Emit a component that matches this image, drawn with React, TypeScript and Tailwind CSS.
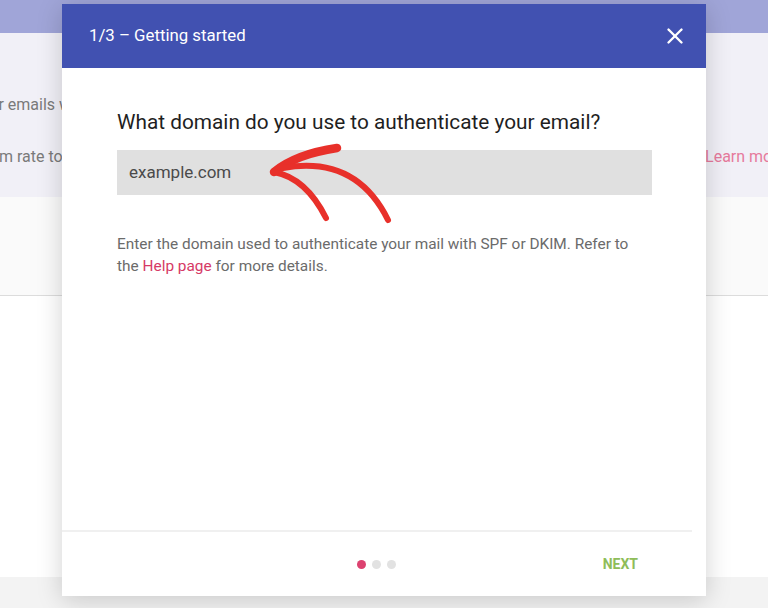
import { X } from "lucide-react";

const dots = ["bg-[#dc4270]", "bg-[#e2e2e2]", "bg-[#e2e2e2]"];

function BackgroundPage() {
  return (
    <div className="flex h-full flex-col">
      <div className="h-[33px] bg-[#a0a5d8]" />
      <div className="flex h-[164px] flex-col bg-[#f1f0f7] pt-[60px] text-[16px] text-[#7a7a7a]">
        <div className="flex h-[24px] items-center">
          <span className="-ml-[27px] whitespace-nowrap">your emails will be</span>
        </div>
        <div className="mt-[28px] flex h-[24px] items-center justify-between">
          <span className="-ml-[27px] whitespace-nowrap">spam rate to you</span>
          <span className="-mr-[18px] whitespace-nowrap text-[#e67a9c]">Learn more</span>
        </div>
      </div>
      <div className="h-[99px] border-b border-[#dcdcdc] bg-[#fafafa]" />
      <div className="h-[281px] bg-white" />
      <div className="flex-1 bg-[#f3f3f3]" />
    </div>
  );
}

function RedArrow() {
  return (
    <svg
      className="pointer-events-none absolute inset-0"
      width="768"
      height="608"
      viewBox="0 0 768 608"
      fill="none"
      stroke="#e8302a"
      strokeLinecap="round"
      strokeLinejoin="round"
    >
      <path d="M274 172 Q296 154 337 148" strokeWidth="8.5" />
      <path d="M274 172 Q306 178 326 218" strokeWidth="6" />
      <path d="M283 168 Q356 155 388 220" strokeWidth="6" />
    </svg>
  );
}

export default function App() {
  return (
    <div className="relative h-[608px] w-[768px] overflow-hidden bg-white font-['Roboto',sans-serif]">
      <BackgroundPage />

      <div className="absolute left-[62px] top-[4px] flex h-[592px] w-[644px] flex-col bg-white shadow-[0_4px_24px_rgba(0,0,0,0.18)]">
        <header className="flex h-[64px] items-center justify-between bg-[#4151b1] pl-[27px] pr-[18px]">
          <h1 className="text-[16.8px] text-white">1/3 – Getting started</h1>
          <X className="size-[26px] text-white" strokeWidth={2.2} />
        </header>

        <div className="flex flex-1 flex-col px-[55px] pt-[40px]">
          <h2 className="text-[20.8px] leading-[28px] text-[#1f1f1f]">
            What domain do you use to authenticate your email?
          </h2>
          <div className="mt-[14px] flex h-[45px] w-[535px] items-center bg-[#e0e0e0] px-[12px] text-[17px] text-[#4a4a4a]">
            example.com
          </div>
          <p className="mt-[38px] text-[15.4px] leading-[22px] text-[#6b6b6b]">
            Enter the domain used to authenticate your mail with SPF or DKIM. Refer to
            <br />
            the <span className="text-[#d63a66]">Help page</span> for more details.
          </p>
        </div>

        <div className="mr-[14px] h-[2px] bg-[#f0f0f0]" />
        <footer className="flex h-[64px] items-center pl-[295px] pr-[68px]">
          <div className="flex gap-[6px]">
            {dots.map((c, i) => (
              <span key={i} className={`size-[9px] rounded-full ${c}`} />
            ))}
          </div>
          <button type="button" className="ml-auto text-[14px] font-bold text-[#8fbd5a]">
            NEXT
          </button>
        </footer>
      </div>

      <RedArrow />
    </div>
  );
}
